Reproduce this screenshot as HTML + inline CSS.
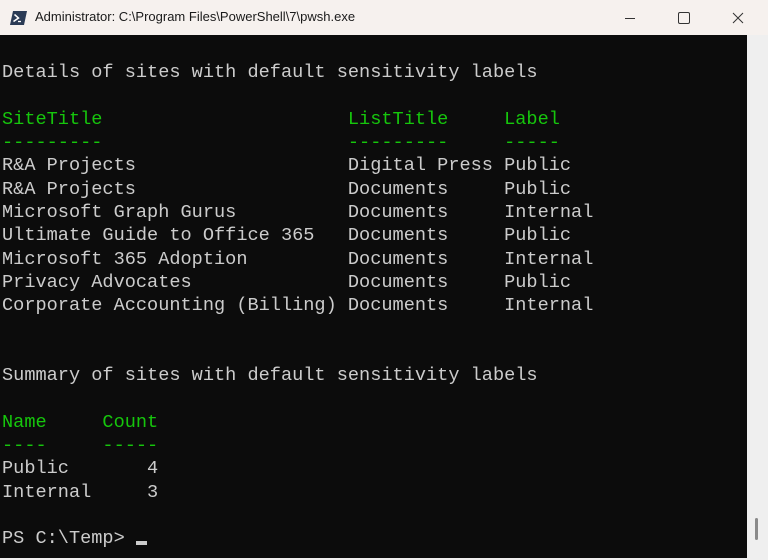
<!DOCTYPE html>
<html><head><meta charset="utf-8"><style>
html,body{margin:0;padding:0;width:768px;height:560px;overflow:hidden;background:#f0efef;}
.title{position:absolute;left:0;top:0;width:768px;height:35px;background:#f6f1ee;}
.title .t{position:absolute;left:35px;top:9px;font:13px "Liberation Sans",sans-serif;color:#1a1a1a;}
.term{position:absolute;left:0;top:35px;width:747px;height:523px;background:#0c0c0c;}
.sb{position:absolute;left:747px;top:35px;width:21px;height:525px;background:#efefef;}
pre{position:absolute;left:2px;top:3px;margin:0;font:18.6px/23.3px "Liberation Mono",monospace;color:#cccccc;}
.g{color:#16c60c;}
.cur{display:inline-block;width:11px;height:4px;background:#ccc;vertical-align:-2px;}
</style></head><body>
<div class="title">
<svg style="position:absolute;left:10px;top:11px" width="17" height="14" viewBox="0 0 17 14"><path d="M3 0H17L14 14H0Z" fill="#2b3b55"/><path d="M4.5 3.5L8.5 7L3.5 10.5" stroke="#fff" stroke-width="1.5" fill="none"/><path d="M8 10.5H11" stroke="#fff" stroke-width="1.3"/></svg>
<div class="t">Administrator: C:\Program Files\PowerShell\7\pwsh.exe</div>
<svg style="position:absolute;left:620px;top:10px" width="140" height="16"><path d="M5 8.5H15" stroke="#333" stroke-width="1"/><rect x="58.5" y="2.5" width="11" height="11" rx="1.5" fill="none" stroke="#333"/><path d="M113 3L123 13M123 3L113 13" stroke="#333" stroke-width="1"/></svg>
</div>
<div class="term"><pre>

Details of sites with default sensitivity labels

<span class="g">SiteTitle                      ListTitle     Label
---------                      ---------     -----</span>
R&amp;A Projects                   Digital Press Public
R&amp;A Projects                   Documents     Public
Microsoft Graph Gurus          Documents     Internal
Ultimate Guide to Office 365   Documents     Public
Microsoft 365 Adoption         Documents     Internal
Privacy Advocates              Documents     Public
Corporate Accounting (Billing) Documents     Internal


Summary of sites with default sensitivity labels

<span class="g">Name     Count
----     -----</span>
Public       4
Internal     3

PS C:\Temp&gt; <span class="cur"></span></pre></div>
<div class="sb"><div style="position:absolute;left:8px;top:483px;width:3px;height:22px;background:#8a8a8a;border-radius:2px"></div></div>
</body></html>
